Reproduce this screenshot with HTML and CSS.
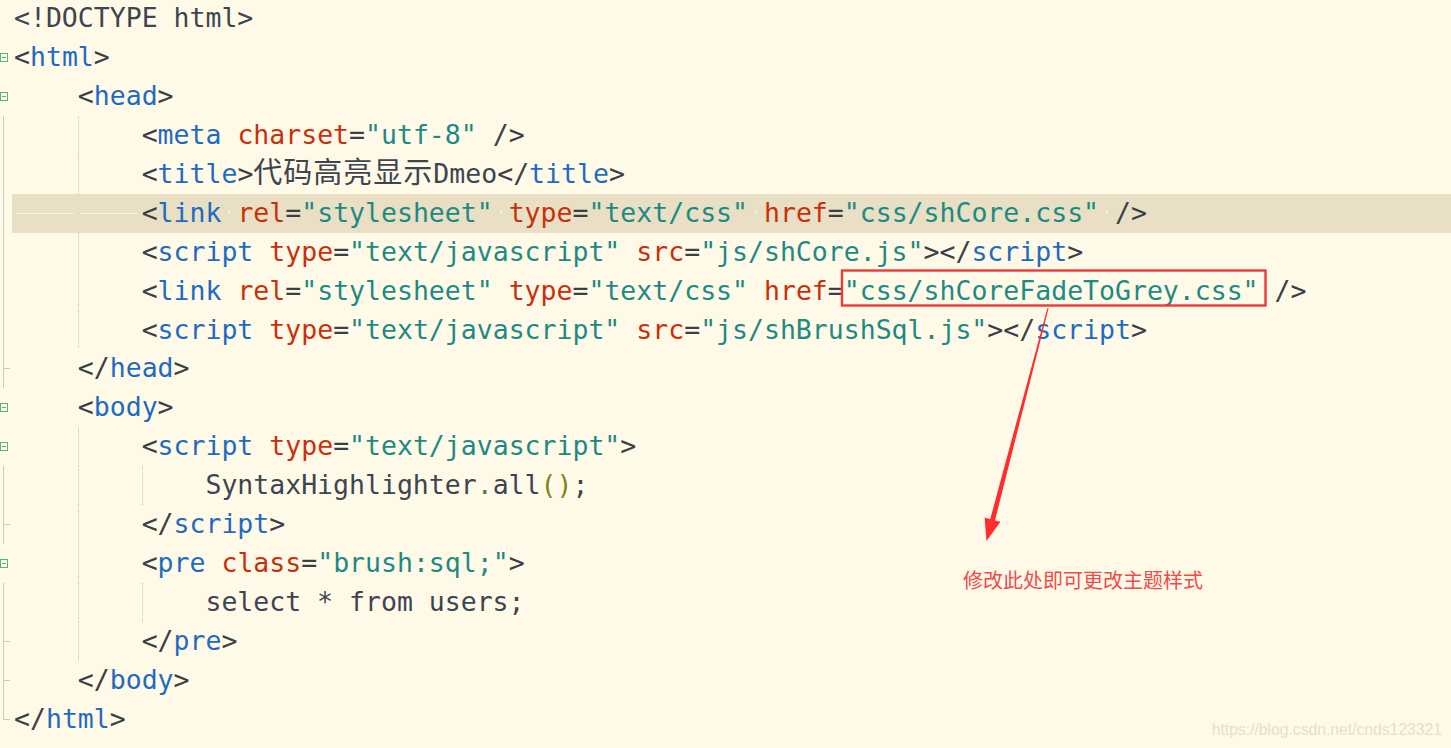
FILE: index.html
```html
<!DOCTYPE html>
<html lang="zh-CN">
<head>
    <meta charset="UTF-8">
    <title>代码高亮显示Dmeo</title>
    <link rel="stylesheet" href="styles.css">
</head>
<body>
    <div class="editor">
        <div class="line"><span class="gut"></span><span class="code"><span class="x">&lt;!DOCTYPE html&gt;</span></span></div>
        <div class="line"><span class="gut fold"></span><span class="code"><span class="p">&lt;</span><span class="t">html</span><span class="p">&gt;</span></span></div>
        <div class="line"><span class="gut fold"></span><span class="ind"></span><span class="code"><span class="p">&lt;</span><span class="t">head</span><span class="p">&gt;</span></span></div>
        <div class="line"><span class="gut v"></span><span class="ind"></span><span class="ind g"></span><span class="code"><span class="p">&lt;</span><span class="t">meta</span> <span class="a">charset</span><span class="p">=</span><span class="s">"utf-8"</span> <span class="p">/&gt;</span></span></div>
        <div class="line"><span class="gut v"></span><span class="ind"></span><span class="ind g"></span><span class="code"><span class="p">&lt;</span><span class="t">title</span><span class="p">&gt;</span><span class="cjk">代码高亮显示</span><span class="x">Dmeo</span><span class="p">&lt;/</span><span class="t">title</span><span class="p">&gt;</span></span></div>
        <div class="line cur"><span class="gut v"></span><span class="ind tab"></span><span class="ind tab"></span><span class="code"><span class="p">&lt;</span><span class="t">link</span><span class="sp"> </span><span class="a">rel</span><span class="p">=</span><span class="s">"stylesheet"</span><span class="sp"> </span><span class="a">type</span><span class="p">=</span><span class="s">"text/css"</span><span class="sp"> </span><span class="a">href</span><span class="p">=</span><span class="s">"css/shCore.css"</span><span class="sp"> </span><span class="p">/&gt;</span></span></div>
        <div class="line"><span class="gut v"></span><span class="ind"></span><span class="ind g"></span><span class="code"><span class="p">&lt;</span><span class="t">script</span> <span class="a">type</span><span class="p">=</span><span class="s">"text/javascript"</span> <span class="a">src</span><span class="p">=</span><span class="s">"js/shCore.js"</span><span class="p">&gt;&lt;/</span><span class="t">script</span><span class="p">&gt;</span></span></div>
        <div class="line"><span class="gut v"></span><span class="ind"></span><span class="ind g"></span><span class="code"><span class="p">&lt;</span><span class="t">link</span> <span class="a">rel</span><span class="p">=</span><span class="s">"stylesheet"</span> <span class="a">type</span><span class="p">=</span><span class="s">"text/css"</span> <span class="a">href</span><span class="p">=</span><span class="s">"css/shCoreFadeToGrey.css"</span> <span class="p">/&gt;</span></span></div>
        <div class="line"><span class="gut v"></span><span class="ind"></span><span class="ind g"></span><span class="code"><span class="p">&lt;</span><span class="t">script</span> <span class="a">type</span><span class="p">=</span><span class="s">"text/javascript"</span> <span class="a">src</span><span class="p">=</span><span class="s">"js/shBrushSql.js"</span><span class="p">&gt;&lt;/</span><span class="t">script</span><span class="p">&gt;</span></span></div>
        <div class="line"><span class="gut v end"></span><span class="ind"></span><span class="code"><span class="p">&lt;/</span><span class="t">head</span><span class="p">&gt;</span></span></div>
        <div class="line"><span class="gut fold"></span><span class="ind"></span><span class="code"><span class="p">&lt;</span><span class="t">body</span><span class="p">&gt;</span></span></div>
        <div class="line"><span class="gut fold"></span><span class="ind"></span><span class="ind g"></span><span class="code"><span class="p">&lt;</span><span class="t">script</span> <span class="a">type</span><span class="p">=</span><span class="s">"text/javascript"</span><span class="p">&gt;</span></span></div>
        <div class="line"><span class="gut v"></span><span class="ind"></span><span class="ind g"></span><span class="ind g"></span><span class="code"><span class="x">SyntaxHighlighter</span><span class="dot">.</span><span class="x">all</span><span class="par">()</span><span class="x">;</span></span></div>
        <div class="line"><span class="gut v end"></span><span class="ind"></span><span class="ind g"></span><span class="code"><span class="p">&lt;/</span><span class="t">script</span><span class="p">&gt;</span></span></div>
        <div class="line"><span class="gut fold"></span><span class="ind"></span><span class="ind g"></span><span class="code"><span class="p">&lt;</span><span class="t">pre</span> <span class="a">class</span><span class="p">=</span><span class="s">"brush:sql;"</span><span class="p">&gt;</span></span></div>
        <div class="line"><span class="gut v"></span><span class="ind"></span><span class="ind g"></span><span class="ind g"></span><span class="code"><span class="x">select * from users;</span></span></div>
        <div class="line"><span class="gut v end"></span><span class="ind"></span><span class="ind g"></span><span class="code"><span class="p">&lt;/</span><span class="t">pre</span><span class="p">&gt;</span></span></div>
        <div class="line"><span class="gut v end"></span><span class="ind"></span><span class="code"><span class="p">&lt;/</span><span class="t">body</span><span class="p">&gt;</span></span></div>
        <div class="line"><span class="gut last"></span><span class="code"><span class="p">&lt;/</span><span class="t">html</span><span class="p">&gt;</span></span></div>
    </div>

    <!-- 标注：红框和箭头 -->
    <svg class="marks" width="1451" height="748" viewBox="0 0 1451 748">
        <rect x="842" y="270.5" width="423.5" height="35" fill="none" stroke="#f03a3a" stroke-width="2.4"/>
        <polygon points="1047.4,308 1048.6,308.2 995,520.4 1000.5,521.8 986.5,541 984.6,517.6 990.2,519.2" fill="#ff2e2e"/>
    </svg>
    <p class="note">修改此处即可更改主题样式</p>
    <p class="watermark">https://blog.csdn.net/cnds123321</p>
</body>
</html>
```

FILE: styles.css
```css
body {
    margin: 0;
    height: 748px;
    overflow: hidden;
    position: relative;
    background: #fff9e8;
}

.editor {
    font-family: "DejaVu Sans Mono", monospace;
    font-size: 26.5px;
    color: #3c4550;
    margin-top: -1px;
}

.line {
    display: flex;
    height: 38.94px;
}

.line.cur {
    background: linear-gradient(to right, transparent 12px, #e8dfc4 12px);
}

/* gutter: fold markers and fold lines */
.gut {
    flex: none;
    width: 12px;
    margin-right: 2px;
    display: flex;
    align-items: center;
}

.gut.fold::before {
    content: "";
    display: block;
    box-sizing: border-box;
    width: 8px;
    height: 9px;
    border: 1px solid #58b27a;
    background: linear-gradient(#58b27a, #58b27a) 1px 50% / 4px 1px no-repeat;
}

.gut.v {
    background: linear-gradient(#cfc9b6, #cfc9b6) 3px 0 / 1px 100% no-repeat;
}

.gut.v.end {
    background:
        linear-gradient(#cfc9b6, #cfc9b6) 3px 50% / 7px 1px no-repeat,
        linear-gradient(#cfc9b6, #cfc9b6) 3px 0 / 1px 100% no-repeat;
}

.gut.last {
    background:
        linear-gradient(#cfc9b6, #cfc9b6) 3px 50% / 7px 1px no-repeat,
        linear-gradient(#cfc9b6, #cfc9b6) 3px 0 / 1px 50% no-repeat;
}

/* indentation + guides */
.ind {
    flex: none;
    width: 4ch;
}

.ind.g {
    background: linear-gradient(#c6c1b3 50%, transparent 50%) 0 0 / 1px 2px repeat-y;
}

.ind.tab {
    background: linear-gradient(#f8f3e4, #f8f3e4) 2px 50% / 58px 1px no-repeat;
}

.code {
    white-space: pre;
    line-height: 38.94px;
}

.sp {
    background: radial-gradient(circle, #f7f2e2 1px, transparent 1.6px) no-repeat center;
}

/* tokens */
.p { color: #3a3f46; }
.t { color: #1f6bc0; }
.a { color: #c8300c; }
.s { color: #1d8a83; }
.x { color: #3c4550; }
.dot { color: #3f8a3a; }
.par { color: #7d8614; }

.cjk {
    font-family: "Noto Sans CJK SC", sans-serif;
    font-size: 29px;
    letter-spacing: 1px;
    line-height: 1;
    color: #3c4550;
}

/* annotations */
.marks {
    position: absolute;
    left: 0;
    top: 0;
    pointer-events: none;
}

.note {
    position: absolute;
    left: 963px;
    top: 570px;
    margin: 0;
    font-family: "Noto Sans CJK SC", sans-serif;
    font-size: 20px;
    line-height: 20px;
    color: #f04a4a;
}

.watermark {
    position: absolute;
    right: 9px;
    top: 722px;
    margin: 0;
    font-family: "Liberation Sans", Arial, sans-serif;
    font-size: 15.7px;
    line-height: 16px;
    color: #e5dfcd;
}
```
